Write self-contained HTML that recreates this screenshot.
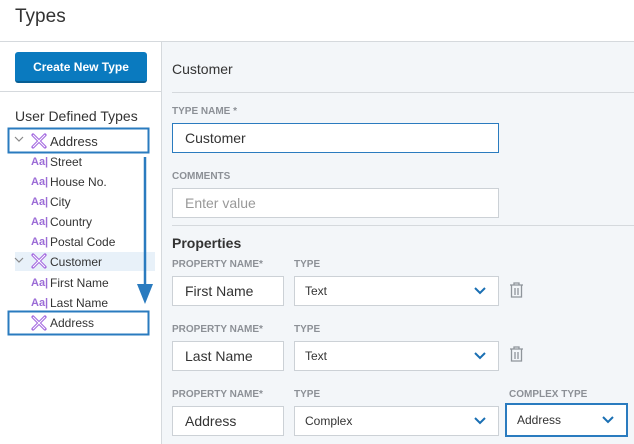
<!DOCTYPE html>
<html><head><style>
*{box-sizing:border-box;margin:0;padding:0}
body{width:634px;height:444px;overflow:hidden;font-family:"Liberation Sans",sans-serif;background:#fff;position:relative;color:#333}
.a{position:absolute}
.lbl{position:absolute;font-size:10px;font-weight:bold;color:#8c9096;letter-spacing:0}
.inp{position:absolute;background:#fff;border:1px solid #ccd1d6;font-size:14px;color:#333;padding-left:12px;display:flex;align-items:center}
.sel{font-size:12px;padding-left:10px}
.chev{position:absolute;right:12px;top:50%;margin-top:-4px}
.tr{position:absolute;font-size:12px;color:#333;left:50px}
.aa{position:absolute;left:31px;font-size:11px;font-weight:bold;color:#9b6bd6}
</style></head><body>
<div class="a" style="left:15px;top:6px;font-size:19px;color:#333">Types</div>
<div class="a" style="left:0;top:41px;width:634px;height:1px;background:#d5d9dd"></div>
<div class="a" style="left:161px;top:42px;width:473px;height:402px;background:#f3f6f9;border-left:1px solid #d5d9dd"></div>
<div class="a" style="left:15px;top:52px;width:132px;height:31px;background:#0a7abf;border-radius:3px;border-bottom:2px solid #075e94;color:#fff;font-size:12px;font-weight:bold;display:flex;align-items:center;justify-content:center">Create New Type</div>
<div class="a" style="left:0;top:91px;width:161px;height:1px;background:#d5d9dd"></div>
<div class="a" style="left:15px;top:108px;font-size:14px;color:#333">User Defined Types</div>
<div class="a" style="left:15px;top:252px;width:140px;height:19px;background:#e8f1f9"></div>
<svg class="a" style="left:0;top:0" width="634" height="444">
<defs><g id="x"><path d="M2 2 L14 14 M14 2 L2 14" stroke="#a56be0" stroke-width="3.2" fill="none" stroke-linecap="round"/><path d="M2 2 L14 14 M14 2 L2 14" stroke="#fff" stroke-width="1" fill="none"/></g>
<path id="v" d="M0 0 L4 4 L8 0" stroke="#888" stroke-width="1.2" fill="none"/></defs>
<use href="#x" x="31" y="133"/><use href="#x" x="31" y="253"/><use href="#x" x="31" y="315"/>
<use href="#v" x="15" y="137"/><use href="#v" x="15" y="258"/>
<rect x="8.5" y="128.5" width="140" height="24" fill="none" stroke="#2a7bbf" stroke-width="2"/>
<rect x="8.5" y="311.5" width="140" height="23" fill="none" stroke="#2a7bbf" stroke-width="2"/>
<line x1="145" y1="157" x2="145" y2="290" stroke="#2a7bbf" stroke-width="2.5"/>
<path d="M137 284 L153 284 L145 304 Z" fill="#2a7bbf"/>
<g fill="none" stroke="#8f959b" stroke-width="1.3"><path d="M510 285h13M514 285v-2h5v2M511.5 285v12h10v-12M515 288v7M518 288v7"/><path d="M510 349h13M514 349v-2h5v2M511.5 349v12h10v-12M515 352v7M518 352v7"/></g>
</svg>
<div class="tr" style="top:134px;font-size:13px">Address</div>
<div class="aa" style="top:156px">Aa|</div><div class="tr" style="top:155px">Street</div>
<div class="aa" style="top:176px">Aa|</div><div class="tr" style="top:175px">House No.</div>
<div class="aa" style="top:196px">Aa|</div><div class="tr" style="top:195px">City</div>
<div class="aa" style="top:216px">Aa|</div><div class="tr" style="top:215px">Country</div>
<div class="aa" style="top:236px">Aa|</div><div class="tr" style="top:235px">Postal Code</div>
<div class="tr" style="top:255px">Customer</div>
<div class="aa" style="top:277px">Aa|</div><div class="tr" style="top:276px">First Name</div>
<div class="aa" style="top:297px">Aa|</div><div class="tr" style="top:296px">Last Name</div>
<div class="tr" style="top:316px">Address</div>

<div class="a" style="left:172px;top:61px;font-size:14px;color:#333">Customer</div>
<div class="a" style="left:172px;top:92px;width:462px;height:1px;background:#d5d9dd"></div>
<div class="lbl" style="left:172px;top:106px">TYPE NAME *</div>
<div class="inp" style="left:172px;top:123px;width:327px;height:30px;border-color:#2a7bbf">Customer</div>
<div class="lbl" style="left:172px;top:171px">COMMENTS</div>
<div class="inp" style="left:172px;top:188px;width:327px;height:30px;color:#999">Enter value</div>
<div class="a" style="left:172px;top:225px;width:462px;height:1px;background:#d5d9dd"></div>
<div class="a" style="left:172px;top:235px;font-size:14px;font-weight:bold;color:#333">Properties</div>

<div class="lbl" style="left:172px;top:259px">PROPERTY NAME*</div><div class="lbl" style="left:294px;top:259px">TYPE</div>
<div class="inp" style="left:172px;top:276px;width:112px;height:30px">First Name</div>
<div class="inp sel" style="left:294px;top:276px;width:205px;height:30px">Text<svg class="chev" width="12" height="8"><path d="M1 1l5 5 5-5" stroke="#1a6fb3" stroke-width="2" fill="none"/></svg></div>

<div class="lbl" style="left:172px;top:324px">PROPERTY NAME*</div><div class="lbl" style="left:294px;top:324px">TYPE</div>
<div class="inp" style="left:172px;top:341px;width:112px;height:30px">Last Name</div>
<div class="inp sel" style="left:294px;top:341px;width:205px;height:30px">Text<svg class="chev" width="12" height="8"><path d="M1 1l5 5 5-5" stroke="#1a6fb3" stroke-width="2" fill="none"/></svg></div>

<div class="lbl" style="left:172px;top:389px">PROPERTY NAME*</div><div class="lbl" style="left:294px;top:389px">TYPE</div><div class="lbl" style="left:509px;top:389px">COMPLEX TYPE</div>
<div class="inp" style="left:172px;top:406px;width:112px;height:30px">Address</div>
<div class="inp sel" style="left:294px;top:406px;width:205px;height:30px">Complex<svg class="chev" width="12" height="8"><path d="M1 1l5 5 5-5" stroke="#1a6fb3" stroke-width="2" fill="none"/></svg></div>
<div class="inp sel" style="left:505px;top:403px;width:123px;height:34px;border:2px solid #2a7bbf;box-shadow:inset 0 0 0 1px #fff">Address<svg class="chev" width="12" height="8"><path d="M1 1l5 5 5-5" stroke="#1a6fb3" stroke-width="2" fill="none"/></svg></div>
</body></html>
